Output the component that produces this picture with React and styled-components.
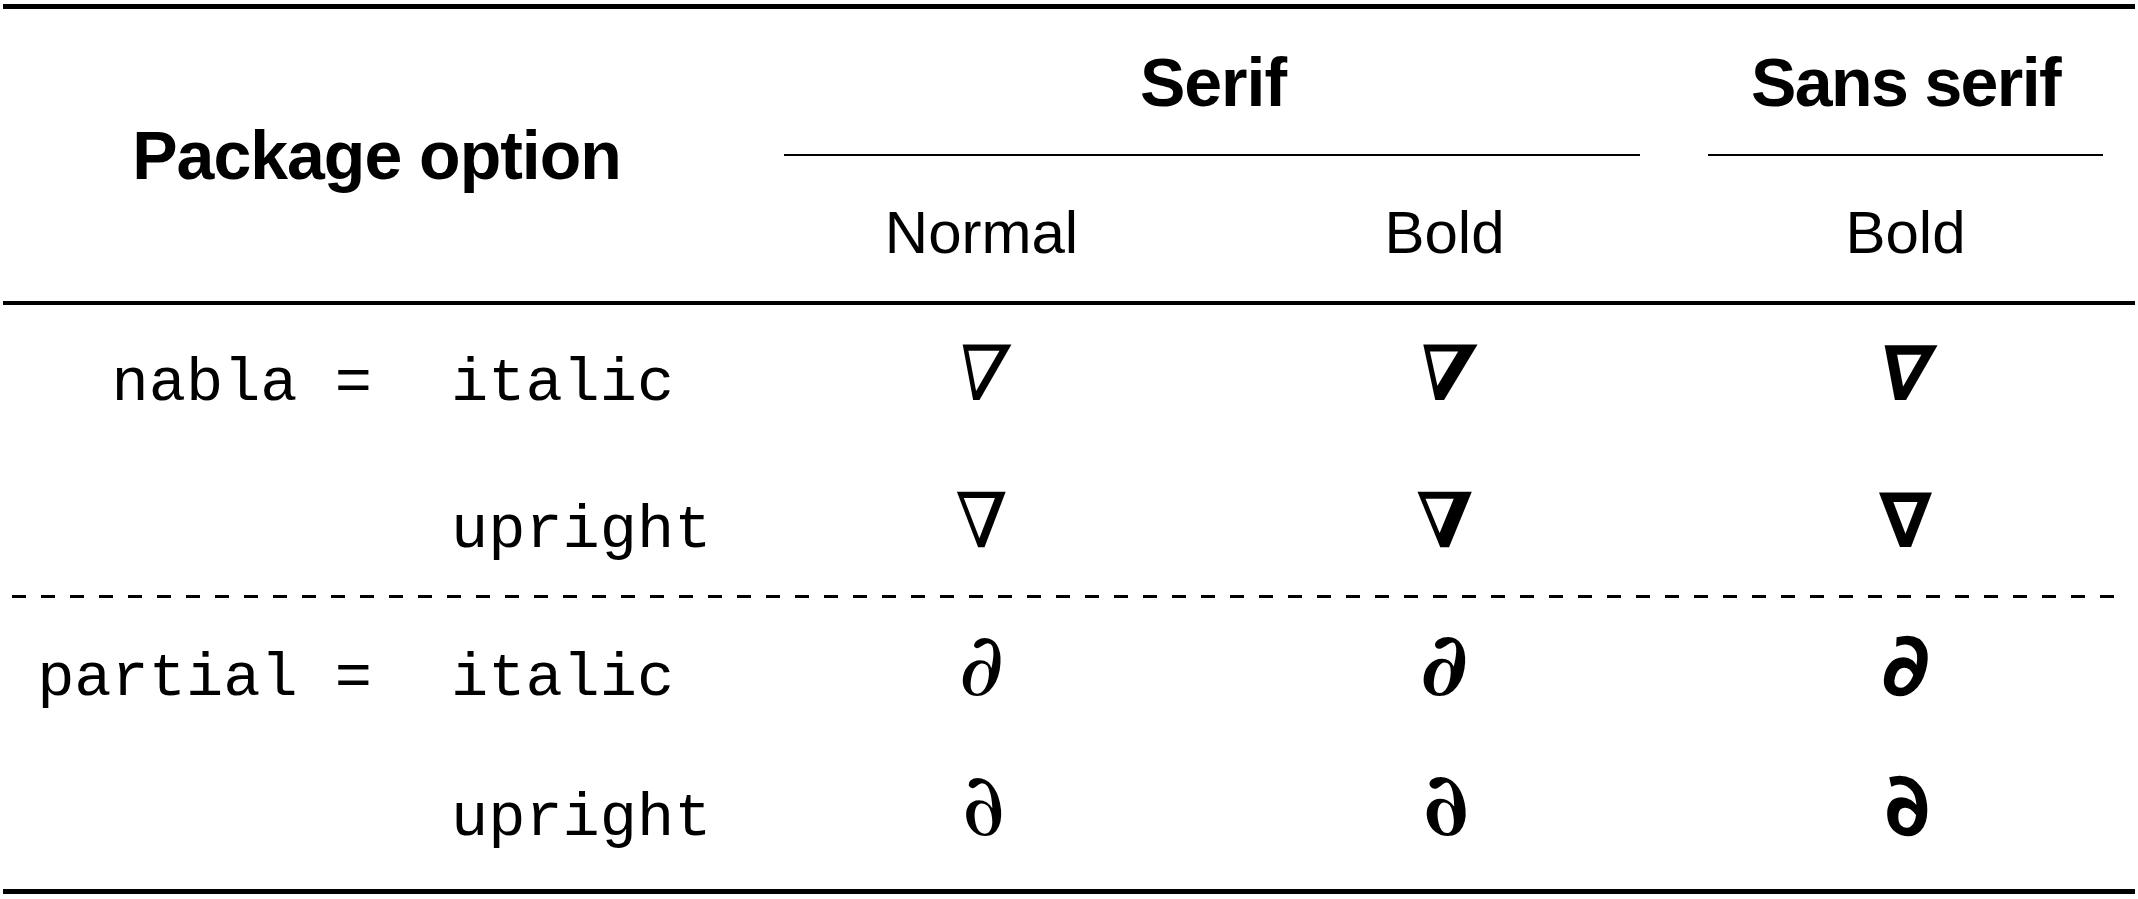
import React from 'react';
import styled, { createGlobalStyle } from 'styled-components';

const GlobalStyle = createGlobalStyle`
  html, body { margin: 0; padding: 0; background: #fff; }
  body { font-family: "Liberation Sans", Arial, sans-serif; color: #000; }
`;

const COLS = '406px 341px 463px 463px 459px';

const Page = styled.div`
  width: 2138px;
  height: 899px;
  box-sizing: border-box;
  padding: 4px 0 0 3px;
  background: #fff;
  overflow: hidden;
`;

const Table = styled.div`
  width: 2132px;
  display: flex;
  flex-direction: column;
`;

const Rule = styled.div`
  height: ${(p) => p.$thickness}px;
  background: #000;
`;

const DashedRule = styled.div`
  height: 3px;
  margin: 0 10px 0 9px;
  background: repeating-linear-gradient(to right, #000 0 14px, transparent 14px 29px);
`;

const Header = styled.div`
  display: grid;
  grid-template-columns: ${COLS};
  grid-template-rows: 145px 2px 145px;
`;

const HeadText = styled.div`
  display: flex;
  align-items: center;
  justify-content: center;
  font-family: "Liberation Sans", Arial, sans-serif;
  font-weight: 700;
  font-size: 68px;
  line-height: 1;
  letter-spacing: ${(p) => p.$spacing ?? -1}px;
  white-space: nowrap;
`;

const StubHead = styled(HeadText)`
  grid-column: 1 / 3;
  grid-row: 1 / 4;
`;

const GroupHead = styled(HeadText)`
  grid-column: ${(p) => p.$cols};
  grid-row: 1;
`;

const GroupRule = styled.div`
  grid-column: ${(p) => p.$cols};
  grid-row: 2;
  margin: 0 ${(p) => p.$right}px 0 ${(p) => p.$left}px;
  background: #000;
`;

const SubHead = styled.div`
  grid-column: ${(p) => p.$col};
  grid-row: 3;
  padding-top: 8px;
  display: flex;
  align-items: center;
  justify-content: center;
  font-family: "Liberation Sans", Arial, sans-serif;
  font-weight: 400;
  font-size: 60px;
  line-height: 1;
`;

const BodyRow = styled.div`
  display: grid;
  grid-template-columns: ${COLS};
  align-items: baseline;
  height: ${(p) => p.$height}px;
  box-sizing: border-box;
  padding-top: ${(p) => p.$pad}px;
  overflow: hidden;
`;

const Mono = styled.div`
  font-family: "Liberation Mono", "Courier New", monospace;
  font-size: 62px;
  line-height: 93px;
  white-space: pre;
`;

const Key = styled(Mono)`
  text-align: right;
  padding-right: 37px;
`;

const Value = styled(Mono)`
  text-align: left;
  padding-left: 42px;
`;

const SymCell = styled.div`
  font-family: ${(p) => (p.$sans ? '"DejaVu Sans", sans-serif' : '"DejaVu Serif", serif')};
  font-weight: ${(p) => (p.$bold ? 700 : 400)};
  font-size: ${(p) => p.$size}px;
  line-height: 60px;
  text-align: center;
`;

const Glyph = styled.span`
  display: inline-block;
  transform: skewX(${(p) => p.$skew}deg);
`;

const rows = [
  { key: 'nabla =', value: 'italic', sym: '\u2207', size: 76, skew: -11, height: 155, pad: 32 },
  { key: '', value: 'upright', sym: '\u2207', size: 76, skew: 0, height: 135, pad: 24 },
  { divider: true },
  { key: 'partial =', value: 'italic', sym: '\u2202', size: 88, skew: -3, height: 147, pad: 34 },
  { key: '', value: 'upright', sym: '\u2202', size: 88, skew: 12, height: 144, pad: 27 },
];

const variants = [
  { bold: false, sans: false },
  { bold: true, sans: false },
  { bold: true, sans: true },
];

export default function App() {
  return (
    <>
      <GlobalStyle />
      <Page>
        <Table>
          <Rule $thickness={5} />
          <Header>
            <StubHead>Package option</StubHead>
            <GroupHead $cols="3 / 5">Serif</GroupHead>
            <GroupHead $cols="5 / 6" $spacing={-1.6}>Sans serif</GroupHead>
            <GroupRule $cols="3 / 5" $left={34} $right={36} />
            <GroupRule $cols="5 / 6" $left={32} $right={32} />
            <SubHead $col="3">Normal</SubHead>
            <SubHead $col="4">Bold</SubHead>
            <SubHead $col="5">Bold</SubHead>
          </Header>
          <Rule $thickness={4} />
          {rows.map((r, i) =>
            r.divider ? (
              <DashedRule key={i} />
            ) : (
              <BodyRow key={i} $height={r.height} $pad={r.pad}>
                <Key>{r.key}</Key>
                <Value>{r.value}</Value>
                {variants.map((v, j) => (
                  <SymCell key={j} $bold={v.bold} $sans={v.sans} $size={r.size}>
                    <Glyph $skew={r.skew}>{r.sym}</Glyph>
                  </SymCell>
                ))}
              </BodyRow>
            )
          )}
          <Rule $thickness={5} />
        </Table>
      </Page>
    </>
  );
}
